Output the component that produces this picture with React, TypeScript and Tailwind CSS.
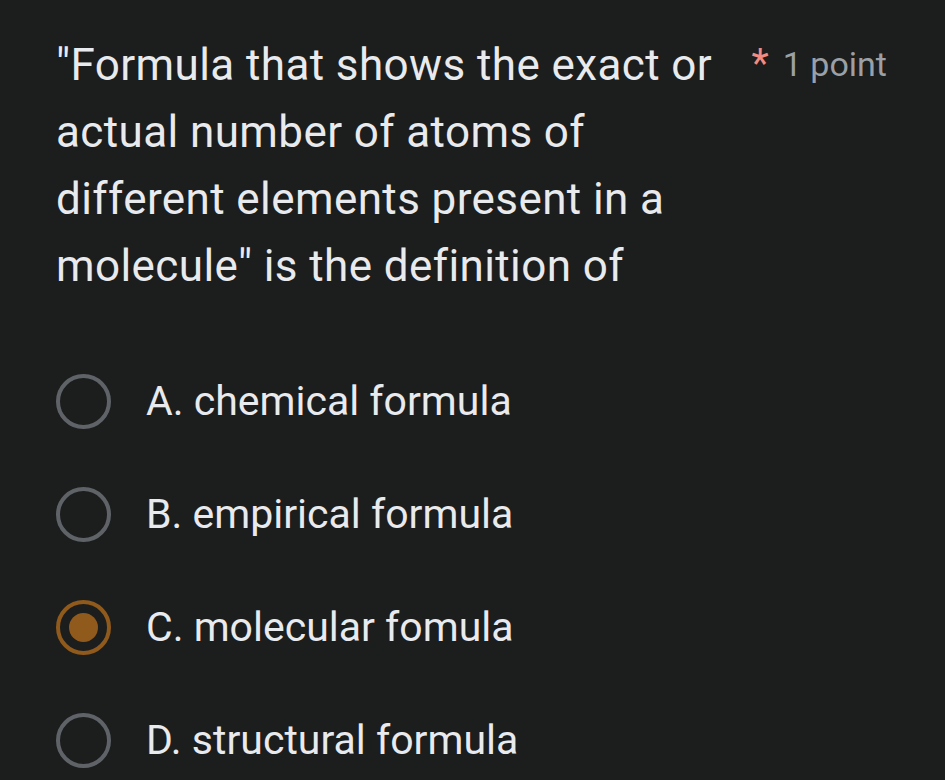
import { useState } from "react"

const options = [
  "A. chemical formula",
  "B. empirical formula",
  "C. molecular fomula",
  "D. structural formula",
]

export default function App() {
  const [selected, setSelected] = useState(2)

  return (
    <div
      className="min-h-screen w-full bg-[#1c1d1d] pl-[56px] pr-[58px] pt-[32px]"
      style={{ fontFamily: "Roboto, 'Noto Sans', sans-serif" }}
    >
      <div className="flex items-start justify-between">
        <div className="w-[672px] text-[44px] leading-[67px] tracking-[0.4px] text-[#e8eaed]">
          "Formula that shows the exact or actual number of atoms of different elements present in a molecule" is the definition of
        </div>
        <div className="flex items-center whitespace-nowrap leading-[64px]">
          <span className="mr-[14px] text-[40px] text-[#f28b82]">*</span>
          <span className="text-[34px] text-[#9aa0a6]">1 point</span>
        </div>
      </div>

      <div className="mt-[45px] flex flex-col">
        {options.map((label, i) => (
          <button
            key={label}
            onClick={() => setSelected(i)}
            className="flex h-[113px] items-center text-left"
          >
            <span
              className={`flex h-[55px] w-[55px] shrink-0 items-center justify-center rounded-full border-[4px] ${
                selected === i ? "border-[#8f5a1c]" : "border-[#5f6368]"
              }`}
            >
              {selected === i && (
                <span className="h-[29px] w-[29px] rounded-full bg-[#8f5a1c]" />
              )}
            </span>
            <span className="ml-[35px] text-[41px] text-[#e8eaed]">{label}</span>
          </button>
        ))}
      </div>
    </div>
  )
}
